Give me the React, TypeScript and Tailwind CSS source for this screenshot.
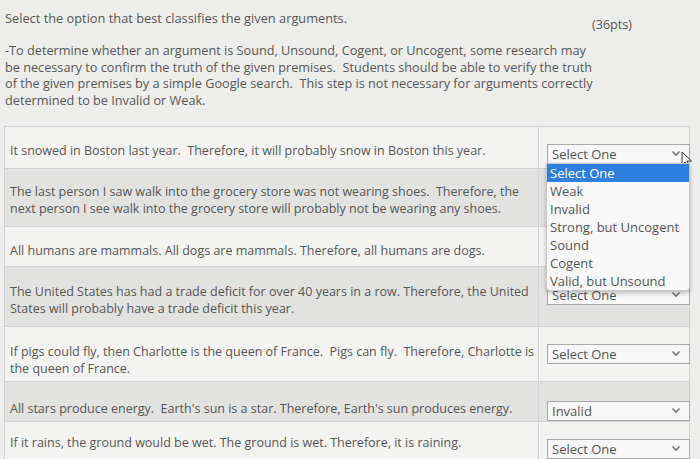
import React from "react"

const Chevron = () => (
  <svg width="10" height="7" viewBox="0 0 10 7" className="shrink-0">
    <path d="M1.5 1.5 L5 5 L8.5 1.5" fill="none" stroke="#777" strokeWidth="1.6" />
  </svg>
)

function Select({ value, cursor }: { value: string; cursor?: boolean }) {
  return (
    <div className="relative flex items-center justify-between w-[143px] h-[20px] border border-[#a8a8a8] bg-[#f7f7f7] pl-[4px] pr-[8px] text-[13px] leading-[18px] text-[#555]">
      <span>{value}</span>
      <Chevron />
      {cursor && (
        <svg width="12" height="18" viewBox="0 0 12 18" className="absolute right-[-4px] top-[6px]">
          <path d="M1 1 L1 14 L4 11 L6.5 16.5 L8.5 15.5 L6 10 L10.5 10 Z" fill="#fff" stroke="#333" strokeWidth="1" />
        </svg>
      )}
    </div>
  )
}

const OPTIONS = ["Select One", "Weak", "Invalid", "Strong, but Uncogent", "Sound", "Cogent", "Valid, but Unsound"]

function Dropdown() {
  return (
    <div className="absolute left-[-1px] top-[19px] w-[144px] bg-[#f8f8f8] border border-[#c8c8c8] rounded-b-[4px] shadow-[0_2px_4px_rgba(0,0,0,0.25)] z-10 text-[13px] leading-[18px] text-[#555]">
      {OPTIONS.map((o, i) => (
        <div key={o} className={i === 0 ? "bg-[#2f7fe0] text-white pl-[3px] h-[18px]" : "pl-[3px] h-[18px]"}>
          {o}
        </div>
      ))}
    </div>
  )
}

type Row = {
  lines: string[]
  value: string
  h: string
  pt: string
  spt: string
  shade: boolean
  open?: boolean
}

const ROWS: Row[] = [
  { lines: ["It snowed in Boston last year.\u00a0 Therefore, it will probably snow in Boston this year."], value: "Select One", h: "h-[42px]", pt: "pt-[15px]", spt: "pt-[17px]", shade: false, open: true },
  { lines: ["The last person I saw walk into the grocery store was not wearing shoes.\u00a0 Therefore, the", "next person I see walk into the grocery store will probably not be wearing any shoes."], value: "Select One", h: "h-[58px]", pt: "pt-[14px]", spt: "pt-[18px]", shade: true },
  { lines: ["All humans are mammals. All dogs are mammals. Therefore, all humans are dogs."], value: "Select One", h: "h-[40px]", pt: "pt-[15px]", spt: "pt-[18px]", shade: false },
  { lines: ["The United States has had a trade deficit for over 40 years in a row. Therefore, the United", "States will probably have a trade deficit this year."], value: "Select One", h: "h-[60px]", pt: "pt-[16px]", spt: "pt-[18px]", shade: true },
  { lines: ["If pigs could fly, then Charlotte is the queen of France.\u00a0 Pigs can fly.\u00a0 Therefore, Charlotte is", "the queen of France."], value: "Select One", h: "h-[55px]", pt: "pt-[16px]", spt: "pt-[17px]", shade: false },
  { lines: ["All stars produce energy.\u00a0 Earth's sun is a star. Therefore, Earth's sun produces energy."], value: "Invalid", h: "h-[40px]", pt: "pt-[18px]", spt: "pt-[19px]", shade: true },
  { lines: ["If it rains, the ground would be wet. The ground is wet. Therefore, it is raining."], value: "Select One", h: "h-[40px]", pt: "pt-[12px]", spt: "pt-[17px]", shade: false },
]

export default function App() {
  return (
    <div className="w-[700px] h-[459px] overflow-hidden bg-[#ededeb] font-['Open_Sans',sans-serif] text-[#575757]">
      <div className="flex justify-between pl-[5px] pr-[68px] pt-[8px]">
        <div className="text-[12.8px] leading-[20px]">Select the option that best classifies the given arguments.</div>
        <div className="text-[12.6px] leading-[18px] pt-[8px]">(36pts)</div>
      </div>
      <div className="pl-[5px] pt-[8px] text-[12.7px] leading-[16.7px] whitespace-nowrap">
        -To determine whether an argument is Sound, Unsound, Cogent, or Uncogent, some research may
        <br />
        be necessary to confirm the truth of the given premises.&nbsp; Students should be able to verify the truth
        <br />
        of the given premises by a simple Google search.&nbsp; This step is not necessary for arguments correctly
        <br />
        determined to be Invalid or Weak.
      </div>
      <div className="mt-[17px] ml-[4px] w-[686px] border-t border-l border-r border-[#cfcfcf]">
        {ROWS.map((r, i) => (
          <div
            key={i}
            className={`flex ${r.h} border-b border-[#d2d2d2] ${r.shade ? "bg-[#e2e2e0]" : "bg-[#f3f3f1]"}`}
          >
            <div className={`w-[533px] shrink-0 pl-[5px] ${r.pt} text-[12.5px] leading-[17px] whitespace-nowrap`}>
              {r.lines.map((l, j) => (
                <div key={j}>{l}</div>
              ))}
            </div>
            <div className={`flex-1 border-l border-[#d2d2d2] pl-[8px] ${r.spt}`}>
              <div className="relative w-[143px]">
                <Select value={r.value} cursor={r.open} />
                {r.open && <Dropdown />}
              </div>
            </div>
          </div>
        ))}
      </div>
    </div>
  )
}
